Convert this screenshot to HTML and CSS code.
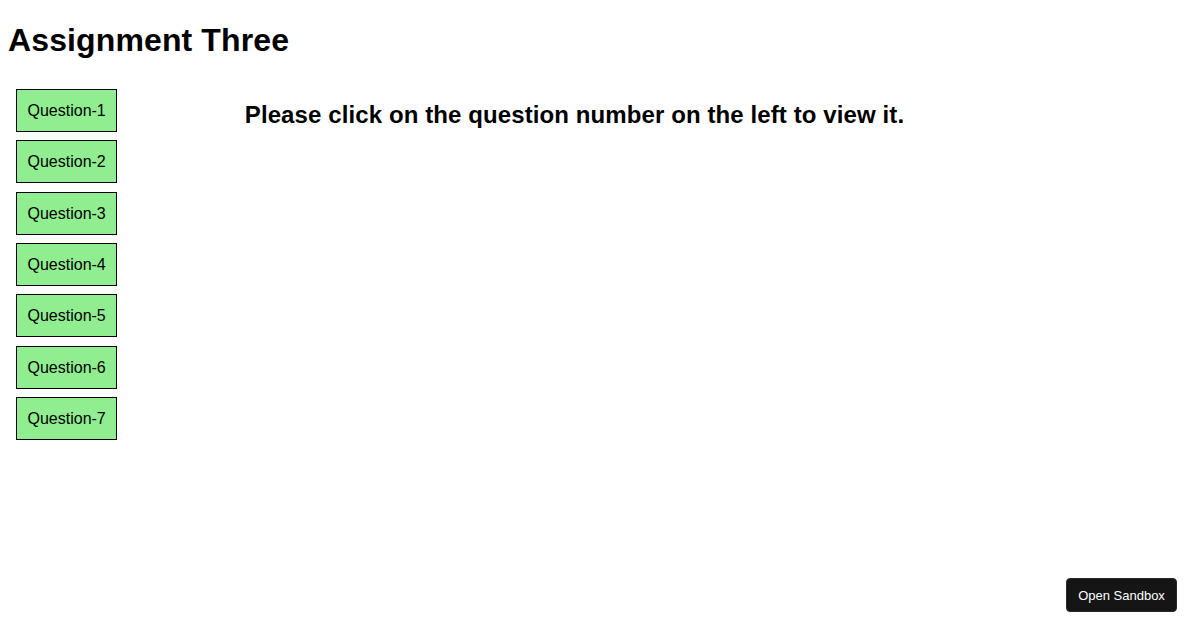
FILE: index.html
```html
<!DOCTYPE html>
<html lang="en">
<head>
<meta charset="utf-8">
<title>Assignment Three</title>
<link rel="stylesheet" href="styles.css">
</head>
<body>
  <h1 class="title">Assignment Three</h1>
  <div class="main">
    <nav class="sidebar">
      <button class="q-btn">Question-1</button>
      <button class="q-btn">Question-2</button>
      <button class="q-btn">Question-3</button>
      <button class="q-btn">Question-4</button>
      <button class="q-btn">Question-5</button>
      <button class="q-btn">Question-6</button>
      <button class="q-btn">Question-7</button>
    </nav>
    <section class="content">
      <h2 class="prompt">Please click on the question number on the left to view it.</h2>
    </section>
  </div>
  <a class="sandbox-btn" href="#">Open Sandbox</a>
</body>
</html>
```

FILE: styles.css
```css
html, body {
  background: #ffffff;
}
body {
  margin: 0;
  padding: 0 8px 8px;
  font-family: "Liberation Sans", Arial, sans-serif;
  color: #000000;
}
.title {
  font-size: 32px;
  font-weight: bold;
  margin: 0 0 21.44px;
  padding-top: 21.5px;
  line-height: normal;
  letter-spacing: 0.12px;
}
.main {
  display: flex;
  flex-direction: row;
  align-items: flex-start;
}
.sidebar {
  width: 20%;
  flex: 0 0 20%;
  box-sizing: border-box;
  padding: 9px 8px;
  display: flex;
  flex-direction: column;
  align-items: flex-start;
  gap: 8.33px;
}
.q-btn {
  font-family: "Liberation Sans", Arial, sans-serif;
  font-size: 16px;
  line-height: 19px;
  padding: 11px 10.5px;
  background: #90ee90;
  color: #000000;
  border: 1px solid #000000;
  border-radius: 0;
  margin: 0;
  cursor: pointer;
}
.content {
  flex: 1;
}
.prompt {
  font-size: 24px;
  font-weight: bold;
  margin: 21.5px 0 0;
  line-height: normal;
  letter-spacing: 0.1px;
}
.sandbox-btn {
  position: fixed;
  right: 23px;
  bottom: 18px;
  width: 111px;
  height: 34px;
  box-sizing: border-box;
  display: flex;
  align-items: center;
  justify-content: center;
  background: #151515;
  color: #ffffff;
  border-radius: 4px;
  border: 1px solid #2a2a2a;
  font-family: "Liberation Sans", Arial, sans-serif;
  font-size: 13px;
  text-decoration: none;
}
```
